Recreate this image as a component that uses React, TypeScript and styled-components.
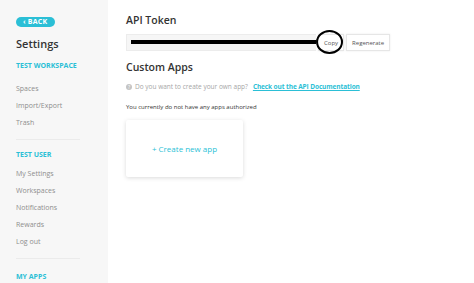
import React from "react";
import styled, { createGlobalStyle } from "styled-components";

const GlobalStyle = createGlobalStyle`
  html, body {
    margin: 0;
    padding: 0;
    background: #ffffff;
    font-family: "Open Sans", "Liberation Sans", sans-serif;
  }
`;

const teal = "#2bbfd6";

// top padding / gap under title vary a little between sections in the original
const sections = [
  { title: "TEST WORKSPACE", top: 8, gap: 8, items: ["Spaces", "Import/Export", "Trash"] },
  { title: "TEST USER", top: 9, gap: 4, items: ["My Settings", "Workspaces", "Notifications", "Rewards", "Log out"] },
  { title: "MY APPS", top: 12, gap: 4, items: [] as string[] },
];

export default function App() {
  return (
    <>
      <GlobalStyle />
      <Page>
        <Sidebar>
          <BackButton>‹ BACK</BackButton>
          <SideTitle>Settings</SideTitle>
          {sections.map((s, i) => (
            <Section key={s.title} top={s.top} last={i === sections.length - 1}>
              <SectionTitle gap={s.gap}>{s.title}</SectionTitle>
              {s.items.map((item) => (
                <SideLink key={item}>{item}</SideLink>
              ))}
            </Section>
          ))}
        </Sidebar>
        <Main>
          <Heading>API Token</Heading>
          <TokenRow>
            <TokenField>
              <Redaction />
            </TokenField>
            <CopyWrap>
              <SmallButton>Copy</SmallButton>
              <Circle />
            </CopyWrap>
            <SmallButton>Regenerate</SmallButton>
          </TokenRow>
          <Heading>Custom Apps</Heading>
          <HelpLine>
            <HelpIcon>?</HelpIcon>
            <span>Do you want to create your own app?</span>
            <DocLink>Check out the API Documentation</DocLink>
          </HelpLine>
          <Notice>You currently do not have any apps authorized</Notice>
          <AppCard>+ Create new app</AppCard>
        </Main>
      </Page>
    </>
  );
}

const Page = styled.div`
  display: flex;
  width: 474px;
  height: 283px;
  overflow: hidden;
`;

const Sidebar = styled.aside`
  width: 108px;
  flex-shrink: 0;
  background: #f7f7f7;
  padding: 17px 0 0 16px;
  box-sizing: border-box;
  display: flex;
  flex-direction: column;
  align-items: flex-start;
`;

const BackButton = styled.div`
  background: ${teal};
  color: #fff;
  font-size: 7px;
  font-weight: 700;
  height: 10px;
  line-height: 10px;
  padding: 0 8px 0 7px;
  border-radius: 6px;
  letter-spacing: 0.2px;
`;

const SideTitle = styled.div`
  margin-top: 9px;
  font-size: 11px;
  font-weight: 600;
  color: #333;
  line-height: 16px;
`;

const Section = styled.div<{ top: number; last?: boolean }>`
  width: 64px;
  padding: ${(p) => p.top}px 0 ${(p) => (p.last ? 0 : 8)}px;
  border-bottom: ${(p) => (p.last ? "none" : "1px solid #ebebeb")};
  display: flex;
  flex-direction: column;
  flex-shrink: 0;
`;

const SectionTitle = styled.div<{ gap: number }>`
  color: ${teal};
  font-size: 7px;
  font-weight: 700;
  line-height: 12px;
  margin-bottom: ${(p) => p.gap}px;
  white-space: nowrap;
`;

const SideLink = styled.div`
  color: #8e8e8e;
  font-size: 7px;
  line-height: 17px;
  white-space: nowrap;
`;

const Main = styled.main`
  flex: 1;
  padding: 12px 0 0 18px;
  display: flex;
  flex-direction: column;
  align-items: flex-start;
`;

const Heading = styled.div`
  font-size: 10.5px;
  font-weight: 600;
  color: #333;
  line-height: 16px;
`;

const TokenRow = styled.div`
  display: flex;
  align-items: center;
  margin: 5px 0 8px;
  height: 18px;
`;

const TokenField = styled.div`
  width: 190px;
  height: 17px;
  background: #f6f6f6;
  border: 1px solid #ececec;
  border-right: none;
  display: flex;
  align-items: center;
  padding-left: 4px;
  box-sizing: border-box;
`;

const Redaction = styled.div`
  height: 4px;
  width: 186px;
  background: #000;
`;

const CopyWrap = styled.div`
  position: relative;
  display: flex;
`;

const SmallButton = styled.div`
  height: 17px;
  line-height: 17px;
  padding: 0 5px;
  font-size: 6px;
  color: #555;
  background: #fff;
  border: 1px solid #e6e6e6;
  box-shadow: 0 0 2px rgba(0, 0, 0, 0.08);
  margin-left: 2px;
  box-sizing: border-box;
`;

const Circle = styled.div`
  position: absolute;
  left: 0;
  top: -4px;
  width: 27px;
  height: 24px;
  border: 2px solid #000;
  border-radius: 50%;
  box-sizing: border-box;
`;

const HelpLine = styled.div`
  margin-top: 6px;
  display: flex;
  align-items: center;
  font-size: 6.5px;
  color: #a6a6a6;
  line-height: 12px;
`;

const HelpIcon = styled.span`
  width: 6px;
  height: 6px;
  border-radius: 50%;
  background: #c4c4c4;
  color: #fff;
  font-size: 5px;
  line-height: 6px;
  text-align: center;
  margin-right: 3px;
`;

const DocLink = styled.span`
  color: ${teal};
  font-weight: 700;
  text-decoration: underline;
  margin-left: 5px;
  letter-spacing: -0.1px;
`;

const Notice = styled.div`
  margin-top: 9px;
  font-size: 6px;
  color: #333;
  line-height: 10px;
`;

const AppCard = styled.div`
  margin-top: 8px;
  width: 117px;
  height: 57px;
  background: #fff;
  box-shadow: 0 1px 4px rgba(0, 0, 0, 0.15);
  border-radius: 2px;
  display: flex;
  align-items: center;
  justify-content: center;
  color: ${teal};
  font-size: 8px;
`;
